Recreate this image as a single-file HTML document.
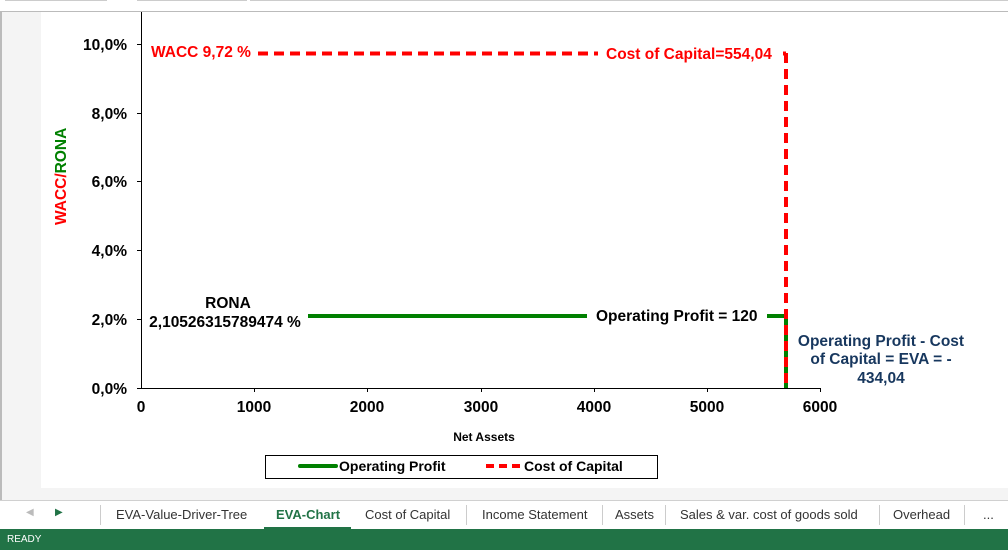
<!DOCTYPE html><html><head><style>
body{margin:0;width:1008px;height:550px;overflow:hidden;background:#f4f4f4;font-family:"Liberation Sans",Arial,sans-serif;position:relative}
.a{position:absolute}
</style></head><body>
<div class="a" style="left:0;top:0;width:1008px;height:11px;background:#fff;border-bottom:1px solid #bbb"></div>
<div class="a" style="left:5px;top:0;width:102px;height:1px;background:#ccc"></div>
<div class="a" style="left:137px;top:0;width:110px;height:1px;background:#ccc"></div>
<div class="a" style="left:250px;top:0;width:758px;height:1px;background:#ccc"></div>
<div class="a" style="left:0;top:11px;width:2px;height:490px;background:#bbb"></div>
<div class="a" style="left:41px;top:12px;width:967px;height:476px;background:#fff"></div>
<svg class="a" style="left:0;top:0" width="1008" height="500" font-family="Liberation Sans,Arial,sans-serif" font-weight="bold">
<line x1="141.5" y1="12" x2="141.5" y2="388" stroke="#000"/>
<line x1="137" y1="388.5" x2="820" y2="388.5" stroke="#000"/>
<g stroke="#000">
<line x1="137" y1="44.5" x2="141" y2="44.5"/><line x1="137" y1="113.5" x2="141" y2="113.5"/><line x1="137" y1="181.5" x2="141" y2="181.5"/><line x1="137" y1="250.5" x2="141" y2="250.5"/><line x1="137" y1="319.5" x2="141" y2="319.5"/>
<line x1="254.5" y1="388" x2="254.5" y2="392"/><line x1="367.5" y1="388" x2="367.5" y2="392"/><line x1="481.5" y1="388" x2="481.5" y2="392"/><line x1="594.5" y1="388" x2="594.5" y2="392"/><line x1="707.5" y1="388" x2="707.5" y2="392"/><line x1="820.5" y1="388" x2="820.5" y2="392"/>
</g>
<g font-size="15.5" text-anchor="end" fill="#000">
<text x="127" y="50">10,0%</text><text x="127" y="119">8,0%</text><text x="127" y="187">6,0%</text><text x="127" y="256">4,0%</text><text x="127" y="325">2,0%</text><text x="127" y="394">0,0%</text>
</g>
<g font-size="15.5" text-anchor="middle">
<text x="141" y="412">0</text><text x="254" y="412">1000</text><text x="367" y="412">2000</text><text x="481" y="412">3000</text><text x="594" y="412">4000</text><text x="707" y="412">5000</text><text x="820" y="412">6000</text>
</g>
<text x="484" y="441" font-size="12" text-anchor="middle">Net Assets</text>
<text transform="translate(66,225) rotate(-90)" font-size="15.5"><tspan fill="#f00">WACC/</tspan><tspan fill="#008000">RONA</tspan></text>
<line x1="308" y1="316" x2="587" y2="316" stroke="#008000" stroke-width="4"/>
<line x1="767" y1="316" x2="786" y2="316" stroke="#008000" stroke-width="4"/>
<line x1="786" y1="316" x2="786" y2="388" stroke="#008000" stroke-width="4"/>
<line x1="258" y1="53.5" x2="598" y2="53.5" stroke="#f00" stroke-width="4" stroke-dasharray="10,6"/>
<line x1="783" y1="53.5" x2="786" y2="53.5" stroke="#f00" stroke-width="4"/>
<line x1="786" y1="53" x2="786" y2="388" stroke="#f00" stroke-width="4" stroke-dasharray="10,6"/>
<text x="151" y="57" font-size="15.5" fill="#f00">WACC 9,72 %</text>
<text x="606" y="59" font-size="15.5" fill="#f00">Cost of Capital=554,04</text>
<text x="228" y="308" font-size="15.5" text-anchor="middle">RONA</text>
<text x="225" y="327" font-size="15.5" text-anchor="middle">2,10526315789474 %</text>
<text x="596" y="321" font-size="15.5">Operating Profit = 120</text>
<g font-size="15.5" fill="#17375e" text-anchor="middle"><text x="881" y="346">Operating Profit - Cost</text><text x="881" y="364">of Capital = EVA = -</text><text x="881" y="383">434,04</text></g>
<rect x="265.5" y="455.5" width="392" height="23" fill="#fff" stroke="#000"/>
<line x1="300" y1="466" x2="336" y2="466" stroke="#008000" stroke-width="4" stroke-linecap="round"/>
<text x="339" y="471" font-size="14">Operating Profit</text>
<line x1="486" y1="466" x2="521" y2="466" stroke="#f00" stroke-width="4" stroke-dasharray="8,5"/>
<text x="524" y="471" font-size="14">Cost of Capital</text>
</svg>
<div class="a" style="left:0;top:500px;width:1008px;height:29px;background:#fff;border-top:1px solid #d0d0d0;font-size:13px;color:#333">
<span class="a" style="left:26px;top:6px;color:#bbb;font-size:10px">◀</span><span class="a" style="left:55px;top:6px;color:#217346;font-size:10px">▶</span>
<div class="a" style="left:100px;top:4px;height:20px;border-left:1px solid #ccc"></div>
<span class="a" style="left:116px;top:6px">EVA-Value-Driver-Tree</span>
<div class="a" style="left:264px;top:0;width:87px;height:26px;border-bottom:2px solid #217346;background:#fff"></div>
<span class="a" style="left:276px;top:6px;font-weight:bold;color:#217346">EVA-Chart</span>
<span class="a" style="left:365px;top:6px">Cost of Capital</span>
<div class="a" style="left:466px;top:4px;height:20px;border-left:1px solid #ccc"></div>
<span class="a" style="left:482px;top:6px">Income Statement</span>
<div class="a" style="left:602px;top:4px;height:20px;border-left:1px solid #ccc"></div>
<span class="a" style="left:615px;top:6px">Assets</span>
<div class="a" style="left:665px;top:4px;height:20px;border-left:1px solid #ccc"></div>
<span class="a" style="left:680px;top:6px">Sales &amp; var. cost of goods sold</span>
<div class="a" style="left:879px;top:4px;height:20px;border-left:1px solid #ccc"></div>
<span class="a" style="left:893px;top:6px">Overhead</span>
<div class="a" style="left:964px;top:4px;height:20px;border-left:1px solid #ccc"></div>
<span class="a" style="left:983px;top:6px">...</span>
</div>
<div class="a" style="left:0;top:529px;width:1008px;height:21px;background:#217346;color:#fff;font-size:10px"><span class="a" style="left:7px;top:5px">READY</span></div>
</body></html>
